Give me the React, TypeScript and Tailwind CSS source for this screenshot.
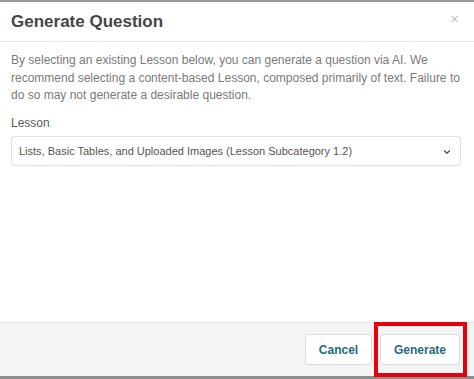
import React from 'react';
import { ChevronDown } from 'lucide-react';

export default function App() {
  return (
    <div
      className="relative flex h-[379px] w-[474px] flex-col overflow-hidden bg-white"
      style={{ fontFamily: '"Liberation Sans", Arial, sans-serif' }}
    >
      {/* top edge */}
      <div className="h-[2px] bg-[#9b9b9b]" />

      {/* Header */}
      <div className="flex h-[40px] items-center justify-between border-b border-[#e8e8e8] pl-[11px] pr-[15px]">
        <h2 className="text-[17px] font-bold text-[#464646]">Generate Question</h2>
        <span className="mt-[-6px] text-[15px] leading-none text-[#c4c4c4]">×</span>
      </div>

      {/* Body */}
      <div className="flex-1 pl-[11px] pr-[13px] pt-[10px]">
        <p className="text-[12px] leading-[17.5px] text-[#7a7a7a]">
          By selecting an existing Lesson below, you can generate a question via AI. We recommend
          selecting a content-based Lesson, composed primarily of text. Failure to do so may not
          generate a desirable question.
        </p>
        <label className="mt-[10px] block text-[12px] leading-[17px] text-[#595959]">Lesson</label>
        <div className="mt-[4px] flex h-[30px] items-center justify-between rounded-[3px] border border-[#e2e2e2] pl-[7px] pr-[8px]">
          <span className="pt-[1px] text-[11px] text-[#555]">
            Lists, Basic Tables, and Uploaded Images (Lesson Subcategory 1.2)
          </span>
          <ChevronDown size={10} strokeWidth={3} className="mt-[2px] text-[#555]" />
        </div>
      </div>

      {/* Footer */}
      <div className="flex h-[54px] items-center justify-end gap-[8px] border-t border-[#e6e6e6] bg-[#f4f4f4] pr-[14px]">
        <button className="h-[31px] w-[67px] rounded-[3px] border border-[#dcdcdc] bg-white text-[12px] font-bold text-[#1f6c82]">
          Cancel
        </button>
        <button className="h-[31px] w-[80px] rounded-[3px] border border-[#dcdcdc] bg-white text-[12px] font-bold text-[#1f6c82]">
          Generate
        </button>
      </div>
      <div className="h-[3px] bg-[#8d8d8d]" />

      {/* highlight annotation */}
      <div className="pointer-events-none absolute left-[374px] top-[322px] h-[55px] w-[93px] border-[4px] border-[#e8000b]" />
    </div>
  );
}
